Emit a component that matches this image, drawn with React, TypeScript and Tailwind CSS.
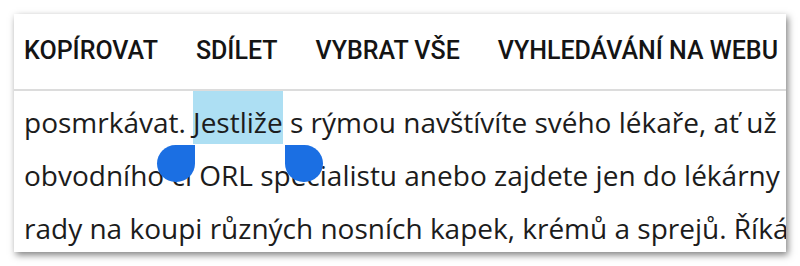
export default function App() {
  const actions = ["KOPÍROVAT", "SDÍLET", "VYBRAT VŠE", "VYHLEDÁVÁNÍ NA WEBU"];

  return (
    <div className="w-[800px] h-[266px] bg-white pt-[14px] pl-[14px] overflow-hidden">
      <div className="relative w-[772px] h-[238px] bg-white overflow-hidden shadow-[2px_3px_7px_rgba(0,0,0,0.5)]">
        {/* Text selection toolbar */}
        <div className="flex items-center gap-[38px] h-[77px] pl-[10px] pb-[2px] border-b-2 border-[#dcdcdc] font-['Roboto',sans-serif] font-medium text-[25px] text-[#141414]">
          {actions.map((a) => (
            <span key={a}>{a}</span>
          ))}
        </div>

        {/* Body text */}
        <div className="pl-[10px] font-['Open_Sans',sans-serif] text-[28px] leading-[43px] text-[#1c1c1c] whitespace-nowrap">
          <p className="pt-[10px]">
            posmrkávat. <span className="inline-block -mt-[10px] pt-[10px] bg-[#addff3]">Jestliže</span> s rýmou navštívíte svého lékaře, ať už
          </p>
          <p className="pt-[10px]">obvodního či ORL specialistu anebo zajdete jen do lékárny</p>
          <p className="pt-[10px]">rady na koupi různých nosních kapek, krémů a sprejů. Říká</p>
        </div>

        {/* Selection handles */}
        <div className="absolute left-[143px] top-[131px] w-[38px] h-[37px] bg-[#1b6fe3] rounded-full rounded-tr-none" />
        <div className="absolute left-[271px] top-[131px] w-[38px] h-[37px] bg-[#1b6fe3] rounded-full rounded-tl-none" />
      </div>
    </div>
  );
}
